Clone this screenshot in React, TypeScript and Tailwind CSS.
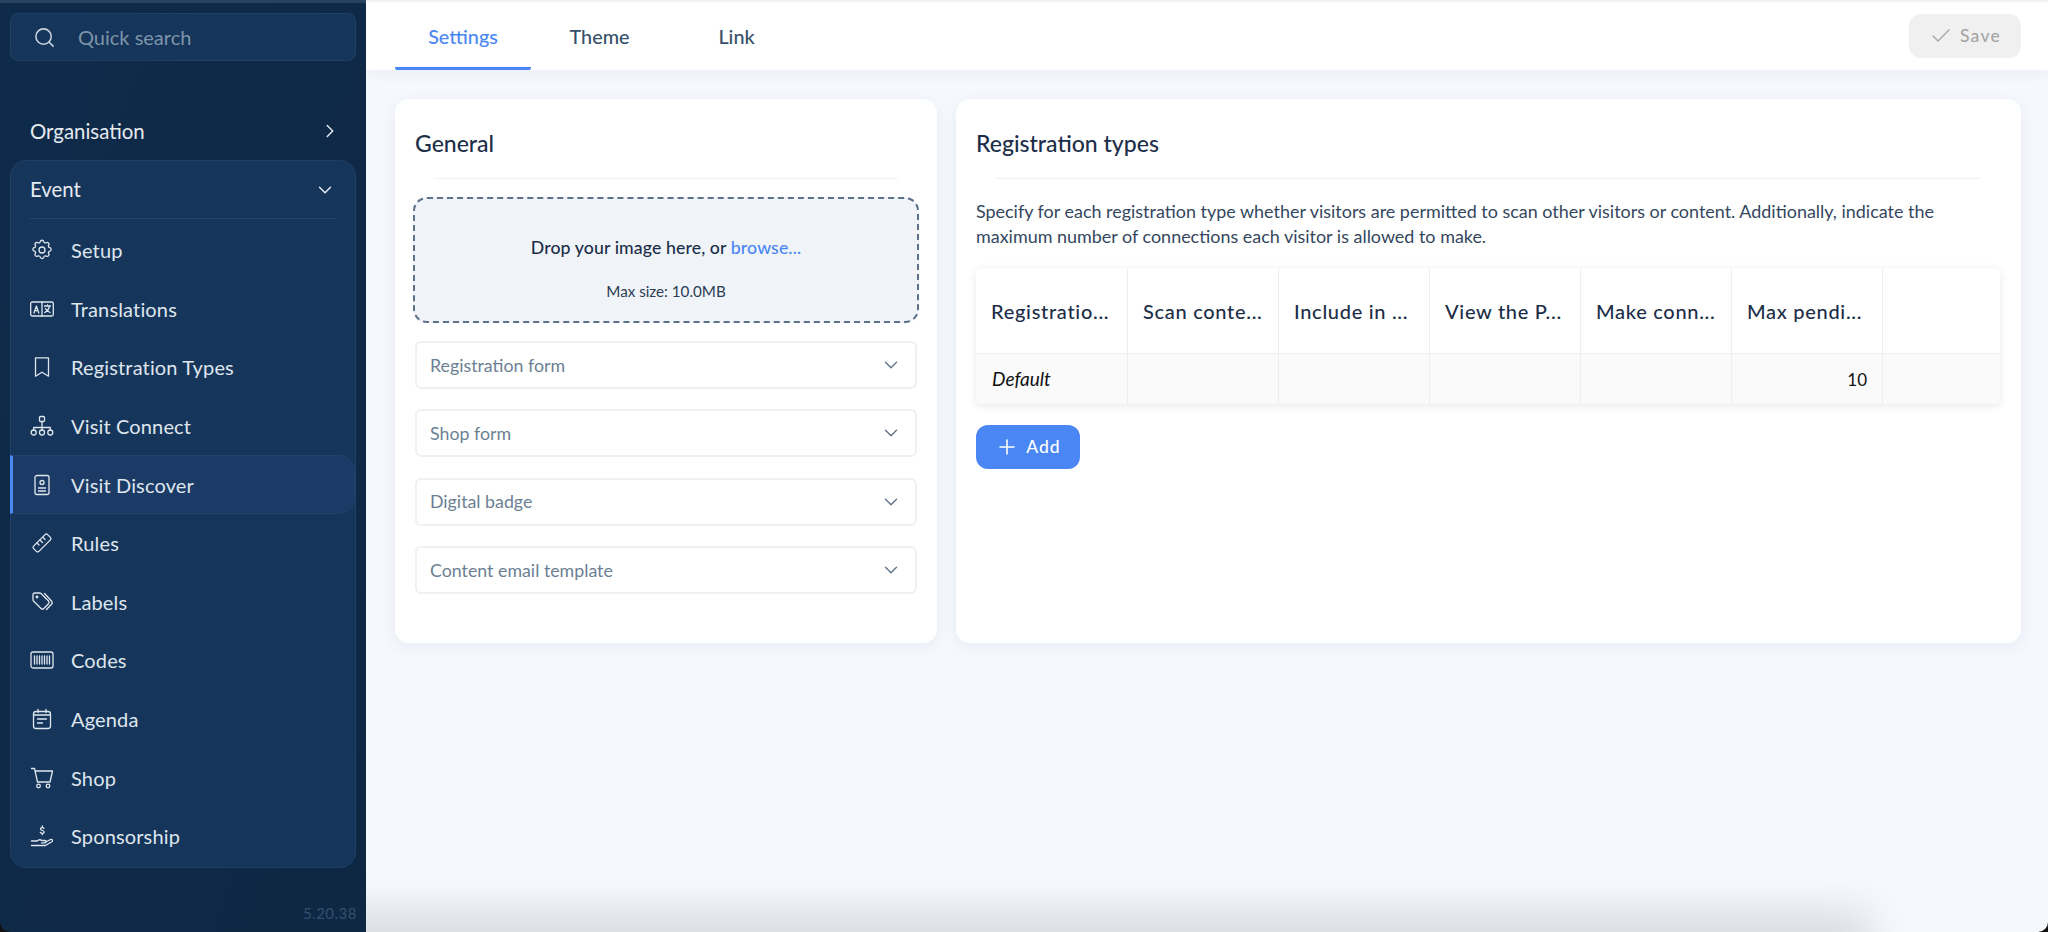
import React from "react";
import { Search, ChevronRight, ChevronDown, Check, Plus } from "lucide-react";

const sp = { fill: "none", stroke: "currentColor", strokeWidth: 1.3, strokeLinecap: "round", strokeLinejoin: "round" } as const;
const Svg = ({ children }: { children: React.ReactNode }) => (
  <svg width="24" height="24" viewBox="0 0 24 24" {...sp}>{children}</svg>
);

const icons: Record<string, React.ReactNode> = {
  Setup: (
    <Svg>
      <path d="M10.3 3.6a1.75 1.75 0 0 1 3.4 0 1.75 1.75 0 0 0 2.6 1.1 1.75 1.75 0 0 1 2.4 2.4 1.75 1.75 0 0 0 1.1 2.6 1.75 1.75 0 0 1 0 3.4 1.75 1.75 0 0 0-1.1 2.6 1.75 1.75 0 0 1-2.4 2.4 1.75 1.75 0 0 0-2.6 1.1 1.75 1.75 0 0 1-3.4 0 1.75 1.75 0 0 0-2.6-1.1 1.75 1.75 0 0 1-2.4-2.4 1.75 1.75 0 0 0-1.1-2.6 1.75 1.75 0 0 1 0-3.4 1.75 1.75 0 0 0 1.1-2.6 1.75 1.75 0 0 1 2.4-2.4 1.75 1.75 0 0 0 2.6-1.1z" />
      <circle cx="12" cy="12" r="3" />
    </Svg>
  ),
  Translations: (
    <Svg>
      <rect x="0.7" y="5" width="22.6" height="14" rx="1.5" />
      <path d="M12 5v14" />
      <path d="M4 16l2.4-7 2.4 7M4.9 13.6h3" />
      <path d="M14.5 9h6M17.5 8v1M19.5 9c-.6 3-2.6 5.5-4.8 6.5M15.5 11.5c.8 1.800 2.500 3.300 4.500 4" />
    </Svg>
  ),
  "Registration Types": (
    <Svg>
      <path d="M5.500 2.800h13v18.400l-6.500-4-6.500 4z" />
    </Svg>
  ),
  "Visit Connect": (
    <Svg>
      <rect x="9.500" y="2.500" width="5" height="5" rx="1" />
      <circle cx="3.700" cy="18.500" r="2.500" />
      <circle cx="12" cy="18.500" r="2.500" />
      <circle cx="20.300" cy="18.500" r="2.500" />
      <path d="M12 7.500v8.500M3.700 16v-2.500h16.600V16" />
    </Svg>
  ),
  "Visit Discover": (
    <Svg>
      <rect x="5" y="2.500" width="14" height="19" rx="2" />
      <circle cx="12" cy="9.500" r="2" />
      <path d="M8.500 15h7M8.500 18h7" />
    </Svg>
  ),
  Rules: (
    <Svg>
      <path d="M17.600 3.600l2.800 2.800a1.800 1.800 0 0 1 0 2.500L8.900 20.400a1.800 1.800 0 0 1-2.500 0l-2.800-2.800a1.800 1.800 0 0 1 0-2.500L15.100 3.600a1.800 1.800 0 0 1 2.500 0z" />
      <path d="M7 12l2 2M10 9l2.500 2.500M13 6.500l2 2" />
    </Svg>
  ),
  Labels: (
    <Svg>
      <path d="M3 4.500a1.500 1.500 0 0 1 1.500-1.500h5.200c.5 0 1 .2 1.300.5l7.500 7.500a2 2 0 0 1 0 2.800l-4.700 4.700a2 2 0 0 1-2.800 0L3.500 11c-.3-.3-.5-.8-.5-1.300z" />
      <path d="M14.500 3.500l7 7.500a2.500 2.500 0 0 1 0 3.300l-5 5.200" />
      <circle cx="7" cy="7" r=".8" />
    </Svg>
  ),
  Codes: (
    <Svg>
      <rect x="1" y="4" width="22" height="16" rx="2" />
      <path d="M4.500 8v8M7 8v8M9.500 8v8M12 8v8M14.500 8v8M17 8v8M19.500 8v8" />
    </Svg>
  ),
  Agenda: (
    <Svg>
      <rect x="3.500" y="4.500" width="17" height="17" rx="2.500" />
      <path d="M8 2.500v3M16 2.500v3M3.500 8h17M7.500 12h9M7.500 16h5" />
    </Svg>
  ),
  Shop: (
    <Svg>
      <path d="M1.500 2.500H4.500l3 13.500h12.500l2.500-11H5.200" />
      <circle cx="8.500" cy="20" r="1.800" />
      <circle cx="18" cy="20" r="1.800" />
    </Svg>
  ),
  Sponsorship: (
    <Svg>
      <path d="M1.500 17h5.500c1.500-1.500 3.500-1.500 5-.5h3c1.500 0 1.500 2.300 0 2.300h-3.500" />
      <path d="M15.500 18l5-2.500c1.800-.7 2.800 1.300 1.300 2.300l-6.300 3.700H1.500" />
      <path d="M14 4.500c-.6-1-3.500-1.300-3.500.5s3.700 1.200 3.700 3-3.200 1.500-3.900.4M12.300 2v1M12.300 9.500v1.200" />
    </Svg>
  ),
};

const items = ["Setup", "Translations", "Registration Types", "Visit Connect", "Visit Discover", "Rules", "Labels", "Codes", "Agenda", "Shop", "Sponsorship"];
const heads = ["Registratio...", "Scan conte...", "Include in ...", "View the P...", "Make conn...", "Max pendi...", ""];
const selects = ["Registration form", "Shop form", "Digital badge", "Content email template"];

function Sidebar() {
  return (
    <aside className="w-[366px] h-full shrink-0 flex flex-col bg-gradient-to-br from-[#0f2b4b] to-[#0e2743] border-t-[3px] border-[#27435f] text-[#e6ebf1]">
      <div className="mx-[10px] mt-[10px] h-[48px] shrink-0 rounded-[8px] bg-[#16355a] border border-[#1f4066] flex items-center pl-[22px]">
        <Search size={23} strokeWidth={1.6} className="text-[#c9d4df]" />
        <span className="ml-[22px] text-[20px] text-[#7d94ab]">Quick search</span>
      </div>
      <div className="mx-[10px] mt-[41px] h-[58px] shrink-0 flex items-center justify-between pl-[20px] pr-[15px] text-[20.400px]">
        <span>Organisation</span>
        <ChevronRight size={22} strokeWidth={1.6} />
      </div>
      <div className="mx-[10px] h-[708px] shrink-0 rounded-[16px] bg-[#16355a] border border-[#1f4066]">
        <div className="mx-[19px] h-[58px] flex items-center justify-between border-b border-[#254669] text-[20.400px]">
          <span>Event</span>
          <ChevronDown size={22} strokeWidth={1.6} />
        </div>
        <div className="pt-[2px]">
          {items.map((name) =>
            name === "Visit Discover" ? (
              <div key={name} className="h-[58.6px] flex items-center pl-[17px] -ml-px rounded-r-[16px] bg-[#1b3a66] border border-l-[3px] border-[#214269] border-l-[#4a87f5] text-[#dfe6ee] text-[20px] tracking-[0.15px]">
                <span className="w-[24px] h-[24px] flex items-center text-[#dfe6ee]">{icons[name]}</span>
                <span className="ml-[17px]">{name}</span>
              </div>
            ) : (
              <div key={name} className="h-[58.6px] flex items-center pl-[19px] text-[#dfe6ee] text-[20px] tracking-[0.15px]">
                <span className="w-[24px] h-[24px] flex items-center">{icons[name]}</span>
                <span className="ml-[17px]">{name}</span>
              </div>
            )
          )}
        </div>
      </div>
      <div className="mt-auto mb-[8px] pr-[9px] text-right text-[15px] tracking-[0.5px] text-[#33506e]">5.20.38</div>
    </aside>
  );
}

function General() {
  return (
    <section className="w-[542px] h-[544px] shrink-0 rounded-[14px] bg-white shadow-[0_4px_16px_rgba(30,60,100,0.06)] px-[20px]">
      <h2 className="h-[79px] flex items-center pt-[10px] text-[23px] font-medium text-[#1c2e48]">General</h2>
      <div className="mx-[19px] border-t border-[#eff1f3]" />
      <div className="mt-[18px] -mx-[2px] h-[126px] rounded-[14px] bg-[#f0f4f9] border-2 border-dashed border-[#5b7089] flex flex-col items-center">
        <p className="mt-[37px] text-[17.700px] font-medium leading-[24px] tracking-[0.1px] text-[#1c2e48]">
          Drop your image here, or <span className="text-[#4a87f5]">browse...</span>
        </p>
        <p className="mt-[21px] text-[15.200px] leading-[20px] text-[#2b3d55]">Max size: 10.0MB</p>
      </div>
      <div className="mt-[18px] flex flex-col gap-[20.300px]">
        {selects.map((s) => (
          <div key={s} className="h-[48px] rounded-[6px] border-2 border-[#eff0f2] flex items-center justify-between pl-[13px] pr-[13px] text-[17.800px] text-[#6b7f93]">
            <span>{s}</span>
            <ChevronDown size={22} strokeWidth={1.5} className="text-[#5f7388]" />
          </div>
        ))}
      </div>
    </section>
  );
}

function Registration() {
  return (
    <section className="w-[1065px] h-[544px] shrink-0 rounded-[14px] bg-white shadow-[0_4px_16px_rgba(30,60,100,0.06)] px-[20px]">
      <h2 className="h-[79px] flex items-center pt-[10px] text-[23px] font-medium text-[#1c2e48]">Registration types</h2>
      <div className="ml-[19px] mr-[21px] border-t border-[#eff1f3]" />
      <p className="mt-[20px] text-[17.950px] leading-[25px] text-[#34475e]">
        Specify for each registration type whether visitors are permitted to scan other visitors or content. Additionally, indicate the maximum number of connections each visitor is allowed to make.
      </p>
      <div className="mt-[19px] w-[1024px] rounded-[6px] shadow-[0_2px_10px_rgba(0,0,0,0.09)] overflow-hidden">
        <div className="grid grid-cols-[152px_151px_151px_151px_151px_151px_1fr] h-[86px] border-b border-[#eeeeee] bg-white">
          {heads.map((h, i) => (
            <div key={i} className={"flex items-center pl-[15px] text-[20px] font-medium tracking-[0.7px] text-[#1c2e48] " + (i < 6 ? "border-r border-[#eeeeee]" : "")}>{h}</div>
          ))}
        </div>
        <div className="grid grid-cols-[152px_151px_151px_151px_151px_151px_1fr] h-[50px] bg-[#fafafa]">
          <div className="flex items-center pl-[16px] pt-[1px] italic text-[19px] text-[#111111] border-r border-[#eeeeee]">Default</div>
          <div className="border-r border-[#eeeeee]" />
          <div className="border-r border-[#eeeeee]" />
          <div className="border-r border-[#eeeeee]" />
          <div className="border-r border-[#eeeeee]" />
          <div className="flex items-center justify-end pr-[15px] pt-[1px] text-[17px] text-[#111111] border-r border-[#eeeeee]">10</div>
          <div />
        </div>
      </div>
      <div className="mt-[21px] w-[104px] h-[44px] rounded-[12px] bg-[#4a87f5] flex items-center justify-center gap-[7px] text-white text-[17.500px] font-medium tracking-[1px]">
        <Plus size={24} strokeWidth={1.600} />
        <span>Add</span>
      </div>
    </section>
  );
}

export default function App() {
  return (
    <div className="w-[2048px] h-[932px] overflow-hidden bg-[#101010] font-['Lato','Noto_Sans',sans-serif]">
      <div className="w-full h-full flex rounded-b-[10px] overflow-hidden">
        <Sidebar />
        <main className="relative flex-1 min-w-0 h-full bg-[#f5f8fd] overflow-hidden border-t-2 border-[#f0f1f2]">
          <header className="h-[68px] bg-white shadow-[0_3px_14px_rgba(30,60,100,0.05)] flex items-start justify-between pl-[29px] pr-[27px]">
            <nav className="flex h-full text-[19.800px] font-medium">
              <div className="w-[136px] h-full flex items-center justify-center text-[#4a87f5] border-b-[3px] border-[#4a87f5] rounded-b-[2px] pt-[4px]">Settings</div>
              <div className="w-[137px] h-full flex items-center justify-center text-[#36506b] pt-[1px]">Theme</div>
              <div className="w-[137px] h-full flex items-center justify-center text-[#36506b] pt-[1px]">Link</div>
            </nav>
            <div className="mt-[12px] w-[112px] h-[44px] rounded-[12px] bg-[#f0f0f0] flex items-center justify-center gap-[7px] text-[#a6a6a6] text-[17.500px] font-medium tracking-[1.300px]">
              <Check size={24} strokeWidth={1.400} />
              <span>Save</span>
            </div>
          </header>
          <div className="flex gap-[19px] pl-[29px] pt-[29px]">
            <General />
            <Registration />
          </div>
          <div className="absolute left-[-40px] right-[200px] bottom-[-12px] h-[10px] shadow-[0_0_42px_22px_rgba(0,0,0,0.12)]" />
        </main>
      </div>
    </div>
  );
}
